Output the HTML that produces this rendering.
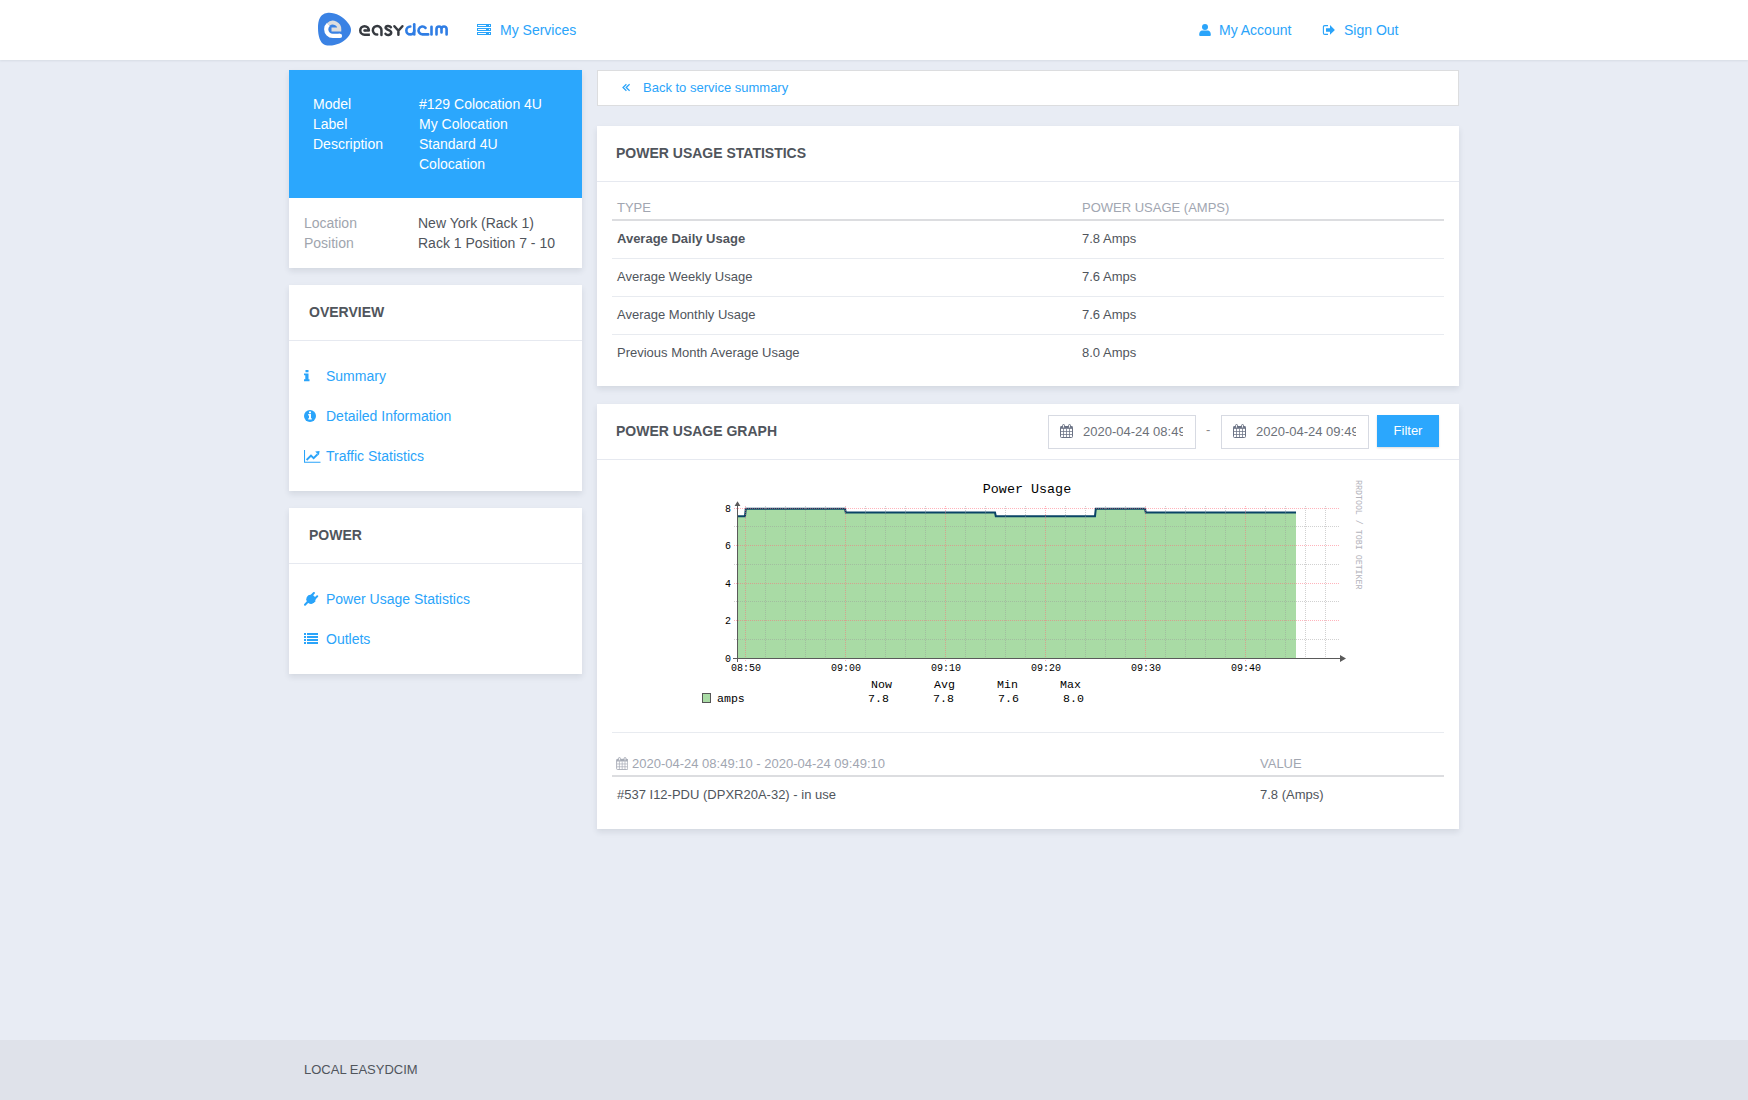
<!DOCTYPE html>
<html><head><meta charset="utf-8">
<style>
*{box-sizing:border-box;margin:0;padding:0}
html,body{width:1748px;height:1100px;overflow:hidden}
body{background:#e8ecf4;font-family:"Liberation Sans",sans-serif;color:#50555c;position:relative}
.abs{position:absolute}
#hdr{left:0;top:0;width:1748px;height:60px;background:#fff;box-shadow:0 1px 2px rgba(40,50,80,.09)}
.nav{position:absolute;top:0;height:60px;line-height:60px;font-size:14px;color:#2aa4fa;white-space:nowrap}
.nav svg{position:absolute}
.panel{position:absolute;background:#fff;box-shadow:0 3px 6px rgba(30,35,60,.1)}
.ph{height:56px;border-bottom:1px solid #e6e9f0;padding:0 0 0 20px;font-size:14px;font-weight:bold;line-height:55px;color:#50555c}
.menu{padding:15px 0}
.menu div{position:relative;height:40px;line-height:40px;font-size:14px;color:#2aa4fa;padding-left:37px}
.menu svg{position:absolute;left:15px;top:14px}
.kv{position:relative;font-size:14px;line-height:20px}
.kv .k{position:absolute;left:0}
.kv .v{position:absolute}
#foot{left:0;top:1040px;width:1748px;height:60px;background:#dfe2ea}
.tbl{border-collapse:collapse;font-size:13px;color:#50555c}
.tbl td{padding:0 0 0 5px;height:38px;line-height:18px;border-bottom:1px solid #e8ebf0;vertical-align:middle}
.tbl tr.th td{color:#a1a6b1;height:30px;border-bottom:2px solid #dcdde0;vertical-align:top;padding-top:9px}
.tbl tr.last td{border-bottom:none}
.inp{position:absolute;width:148px;height:34px;border:1px solid #d7dae2;font-size:13px;color:#6c7179}
</style></head><body>
<div id="hdr" class="abs">
  <!-- logo -->
  <svg class="abs" style="left:310px;top:8px" width="150" height="44" viewBox="310 8 150 44">
    <path d="M327 13 C334 12 343 16 348 23 C352 28 352 32 348 37 C342 44 332 47 325 45 C320 43 318 36 318 28 C318 20 320 14 327 13 Z" fill="#3a82e4"/>
    <path d="M340 35.9 H332.8 A6.6 6.6 0 0 1 326.2 29.3 A6.6 6.6 0 0 1 328.4 24.4" fill="none" stroke="#fff" stroke-width="4.2" stroke-linecap="butt"/>
    <path d="M340 35.9 H339" fill="none" stroke="#fff" stroke-width="4.2" stroke-linecap="round"/>
    <path d="M328.2 24.5 A6.6 6.6 0 0 1 339.4 29.5 L331.5 29.5" fill="none" stroke="#dedede" stroke-width="3.8" stroke-linecap="butt"/>
    <g fill="none" stroke="#363a40" stroke-width="2.5" stroke-linejoin="round">
      <path d="M369.9 34.75 H364.55 A4.3 4.3 0 1 1 368.85 30.45 H364.6" stroke-linecap="butt"/>
      <path d="M364.6 30.45 H364.5" stroke-linecap="round"/>
      <path d="M377.2 34.6 A4.3 4.3 0 1 1 381.45 30.45 L381.45 34.9" stroke-linecap="round"/>
      <path d="M390.9 27.2 C389.8 25.6 385.8 25.4 385.6 27.7 C385.4 30 391.2 29.6 391.2 32.6 C391.2 35.6 386.6 35.6 385.5 33.9" stroke-linecap="round"/>
      <path d="M394.4 26.2 L398.4 30.8 L402.4 26.2 M398.4 30.8 L398.4 34.8" stroke-linecap="round"/>
    </g>
    <g fill="none" stroke="#2f7de4" stroke-width="2.6" stroke-linejoin="round">
      <path d="M410.3 26.5 A3.95 3.95 0 1 0 414.25 30.45" stroke-linecap="round"/>
      <path d="M414.25 24.3 V34.4" stroke-linecap="round"/>
      <path d="M425.5 27.9 A3.95 3.95 0 1 0 422.45 34.4 H428.2" stroke-linecap="round"/>
      <path d="M431.5 26.7 V34.4" stroke-linecap="round"/>
      <path d="M436.5 34.4 V29 A2.5 2.5 0 0 1 441.5 29 V32.4 M441.5 29 A2.55 2.5 0 0 1 446.6 29 V34.4" stroke-linecap="round"/>
    </g>
  </svg>
  <div class="nav" style="left:477px">
    <svg style="left:0;top:24px" width="14" height="11" viewBox="0 0 14 11"><g fill="#2aa4fa"><rect x="0" y="0" width="14" height="3"/><rect x="0" y="4" width="14" height="3"/><rect x="0" y="8" width="14" height="3"/></g><g fill="#fff"><rect x="1" y="1" width="8" height="1"/><rect x="1" y="5" width="8" height="1"/><rect x="1" y="9" width="8" height="1"/><rect x="12" y="1" width="1" height="1"/><rect x="12" y="5" width="1" height="1"/><rect x="12" y="9" width="1" height="1"/></g></svg>
    <span style="position:absolute;left:23px">My Services</span>
  </div>
  <div class="nav" style="left:1199px">
    <svg style="left:0;top:24px" width="12" height="12" viewBox="0 0 12 12"><circle cx="6" cy="3" r="3" fill="#2aa4fa"/><path d="M0.2 11 C0.2 7.5 2 6.5 3.2 6.5 L8.8 6.5 C10 6.5 11.8 7.5 11.8 11 Q11.8 12 10.8 12 L1.2 12 Q0.2 12 0.2 11Z" fill="#2aa4fa"/></svg>
    <span style="position:absolute;left:20px">My Account</span>
  </div>
  <div class="nav" style="left:1322px">
    <svg style="left:0;top:24px" width="14" height="12" viewBox="0 0 14 12"><path d="M6 1.6 L2.8 1.6 Q1.4 1.6 1.4 3 L1.4 9 Q1.4 10.4 2.8 10.4 L6 10.4" fill="none" stroke="#2aa4fa" stroke-width="1.1"/><path d="M4 4.2 L8 4.2 L8 1.1 L12.9 5.9 L8 10.7 L8 7.8 L4 7.8 Z" fill="#2aa4fa"/></svg>
    <span style="position:absolute;left:22px">Sign Out</span>
  </div>
</div>

<!-- LEFT COLUMN -->
<div class="panel" style="left:289px;top:70px;width:293px;height:198px">
  <div style="background:#2ba7fd;height:128px;padding:24px 0 0 24px;color:#fff">
    <div class="kv" style="height:80px">
      <div class="k" style="top:0">Model</div><div class="k" style="top:20px">Label</div><div class="k" style="top:40px">Description</div>
      <div class="v" style="left:106px;top:0;width:150px">#129 Colocation 4U<br>My Colocation<br>Standard 4U<br>Colocation</div>
    </div>
  </div>
  <div style="padding:15px 0 0 15px">
    <div class="kv" style="height:40px">
      <div class="k" style="top:0;color:#a0a5ae">Location<br>Position</div>
      <div class="v" style="left:114px;top:0;color:#50555c">New York (Rack 1)<br>Rack 1 Position 7 - 10</div>
    </div>
  </div>
</div>

<div class="panel" style="left:289px;top:285px;width:293px;height:206px">
  <div class="ph" style="height:56px">OVERVIEW</div>
  <div class="menu">
    <div><svg width="7" height="12" viewBox="0 0 7 12" style="left:15px;top:14px"><path d="M1.2 0 H4.2 V2.3 H1.2 Z M-0.3 3.6 H4.2 V9.2 H5.2 V11.2 H-0.3 V9.2 H1 V5.2 H-0.3 Z" fill="#2aa4fa" transform="translate(0.3 0)"/></svg>Summary</div>
    <div><svg width="12" height="12" viewBox="0 0 12 12" style="left:15px;top:14px"><circle cx="6" cy="6" r="6" fill="#2aa4fa"/><path d="M5 1.4 H7 V3.2 H5 Z M4.2 4 H7 V8.2 H7.8 V9.6 H4.2 V8.2 H5 V5.4 H4.2 Z" fill="#fff"/></svg>Detailed Information</div>
    <div><svg width="17" height="13" viewBox="0 0 17 13" style="left:15px;top:14px"><path d="M0.5 0 V12.3 H16.5" fill="none" stroke="#2aa4fa" stroke-width="1.1"/><path d="M2.6 10 L7 5.6 L9.6 8.1 L13.6 4.2" fill="none" stroke="#2aa4fa" stroke-width="1.9" stroke-linejoin="miter"/><path d="M11.2 1.6 L15.6 0.9 L14.9 5.3 Z" fill="#2aa4fa"/></svg>Traffic Statistics</div>
  </div>
</div>

<div class="panel" style="left:289px;top:508px;width:293px;height:166px">
  <div class="ph" style="height:56px">POWER</div>
  <div class="menu">
    <div><svg width="15" height="14" viewBox="0 0 15 14" style="left:15px;top:13px"><g transform="translate(-304 -592)"><circle cx="310.9" cy="599.3" r="4.6" fill="#2aa4fa"/><path d="M310.9 596 L313.9 593 M314.2 599.2 L317.2 596.3 M307.6 602 L305 604.7" stroke="#2aa4fa" stroke-width="2" stroke-linecap="round"/><path d="M308.5 595 L313 595.5 L315.5 601.5 L311 603.8 Z" fill="#2aa4fa"/></g></svg>Power Usage Statistics</div>
    <div><svg width="15" height="12" viewBox="0 0 15 12" style="left:15px;top:14px"><g fill="#2aa4fa"><rect x="0" y="0" width="2" height="2"/><rect x="3" y="0" width="11" height="2"/><rect x="0" y="3" width="2" height="2"/><rect x="3" y="3" width="11" height="2"/><rect x="0" y="6" width="2" height="2"/><rect x="3" y="6" width="11" height="2"/><rect x="0" y="9" width="2" height="2"/><rect x="3" y="9" width="11" height="2"/></g></svg>Outlets</div>
  </div>
</div>

<!-- RIGHT COLUMN -->
<div class="abs" style="left:597px;top:70px;width:862px;height:36px;background:#fff;border:1px solid #dcdddf">
  <svg class="abs" style="left:24px;top:12px" width="9" height="9" viewBox="0 0 9 9"><path d="M4.4 1.2 L1 4.5 L4.4 7.8 M7.6 1.2 L4.2 4.5 L7.6 7.8" fill="none" stroke="#2aa4fa" stroke-width="1.25"/></svg>
  <div class="abs" style="left:45px;top:0;line-height:33px;font-size:13px;color:#2aa4fa">Back to service summary</div>
</div>
<div class="panel" style="left:597px;top:126px;width:862px;height:260px">
  <div class="ph" style="height:56px;padding-left:19px">POWER USAGE STATISTICS</div>
  <table class="tbl" style="position:absolute;left:15px;top:64px;width:832px">
    <tr class="th"><td style="width:465px">TYPE</td><td>POWER USAGE (AMPS)</td></tr>
    <tr><td style="font-weight:bold">Average Daily Usage</td><td>7.8 Amps</td></tr>
    <tr><td>Average Weekly Usage</td><td>7.6 Amps</td></tr>
    <tr><td>Average Monthly Usage</td><td>7.6 Amps</td></tr>
    <tr class="last"><td>Previous Month Average Usage</td><td>8.0 Amps</td></tr>
  </table>
</div>
<div class="panel" style="left:597px;top:404px;width:862px;height:425px">
  <div class="ph" style="height:56px;padding-left:19px">POWER USAGE GRAPH</div>
  <div class="inp" style="left:451px;top:11px">
    <svg class="abs" style="left:11px;top:8px" width="13" height="14" viewBox="0 0 13 14"><rect x="0.5" y="2.5" width="12" height="11" rx="1" fill="none" stroke="#6b7385" stroke-width="1"/><rect x="0.5" y="2.3" width="12" height="2.5" fill="#6b7385"/><path d="M3.5 4.8 V13 M6.5 4.8 V13 M9.5 4.8 V13 M1 7.5 H12 M1 10.5 H12" stroke="#6b7385" stroke-width="1" stroke-opacity="0.75"/><rect x="2.6" y="0.5" width="1.9" height="3.6" rx="0.9" fill="#fff" stroke="#6b7385" stroke-width="1"/><rect x="8.6" y="0.5" width="1.9" height="3.6" rx="0.9" fill="#fff" stroke="#6b7385" stroke-width="1"/></svg>
    <div class="abs" style="left:34px;top:0;width:100px;overflow:hidden;white-space:nowrap;line-height:32px">2020-04-24 08:49:10</div>
  </div>
  <div class="abs" style="left:609px;top:11px;line-height:30px;font-size:13px;color:#888">-</div>
  <div class="inp" style="left:624px;top:11px">
    <svg class="abs" style="left:11px;top:8px" width="13" height="14" viewBox="0 0 13 14"><rect x="0.5" y="2.5" width="12" height="11" rx="1" fill="none" stroke="#6b7385" stroke-width="1"/><rect x="0.5" y="2.3" width="12" height="2.5" fill="#6b7385"/><path d="M3.5 4.8 V13 M6.5 4.8 V13 M9.5 4.8 V13 M1 7.5 H12 M1 10.5 H12" stroke="#6b7385" stroke-width="1" stroke-opacity="0.75"/><rect x="2.6" y="0.5" width="1.9" height="3.6" rx="0.9" fill="#fff" stroke="#6b7385" stroke-width="1"/><rect x="8.6" y="0.5" width="1.9" height="3.6" rx="0.9" fill="#fff" stroke="#6b7385" stroke-width="1"/></svg>
    <div class="abs" style="left:34px;top:0;width:100px;overflow:hidden;white-space:nowrap;line-height:32px">2020-04-24 09:49:10</div>
  </div>
  <div class="abs" style="left:780px;top:11px;width:62px;height:32px;background:#2ba7fd;color:#fff;font-size:13px;line-height:31px;text-align:center;box-shadow:0 1px 2px rgba(0,0,0,.15)">Filter</div>
  <div class="abs" style="left:15px;top:328px;width:832px;border-top:1px solid #e8ebf0"></div>
  <table class="tbl" style="position:absolute;left:15px;top:342px;width:832px">
    <tr class="th"><td style="width:643px;padding-left:4px"><svg width="12.4" height="13" viewBox="0 0 13 14" style="vertical-align:-2px;margin-right:3.6px"><rect x="0.5" y="2.5" width="12" height="11" rx="1" fill="none" stroke="#a6abb6" stroke-width="1"/><rect x="0.5" y="2.3" width="12" height="2.5" fill="#a6abb6"/><path d="M3.5 4.8 V13 M6.5 4.8 V13 M9.5 4.8 V13 M1 7.5 H12 M1 10.5 H12" stroke="#a6abb6" stroke-width="1" stroke-opacity="0.75"/><rect x="2.6" y="0.5" width="1.9" height="3.6" rx="0.9" fill="#fff" stroke="#a6abb6" stroke-width="1"/><rect x="8.6" y="0.5" width="1.9" height="3.6" rx="0.9" fill="#fff" stroke="#a6abb6" stroke-width="1"/></svg>2020-04-24 08:49:10 - 2020-04-24 09:49:10</td><td>VALUE</td></tr>
    <tr class="last"><td style="padding-bottom:2px">#537 I12-PDU (DPXR20A-32) - in use</td><td style="padding-bottom:2px">7.8 (Amps)</td></tr>
  </table>
</div>

<!--CHART--><svg class="abs" style="left:690px;top:470px" width="690" height="242" viewBox="690 470 690 242">
<path d="M738 658 L738 516.20 L745 516.20 L745.8 508.70 L845 508.70 L845.8 512.45 L995 512.45 L995.8 516.20 L1095 516.20 L1095.8 508.70 L1145 508.70 L1145.8 512.45 L1296 512.45 L1296 658 Z" fill="#a9dba5"/>
<path d="M738 516.20 L745 516.20 L745.8 508.70 L845 508.70 L845.8 512.45 L995 512.45 L995.8 516.20 L1095 516.20 L1095.8 508.70 L1145 508.70 L1145.8 512.45 L1296 512.45 " fill="none" stroke="#0a4466" stroke-width="2" stroke-linejoin="miter"/>
<path d="M765.5 506 V658 M785.5 506 V658 M805.5 506 V658 M825.5 506 V658 M865.5 506 V658 M885.5 506 V658 M905.5 506 V658 M925.5 506 V658 M965.5 506 V658 M985.5 506 V658 M1005.5 506 V658 M1025.5 506 V658 M1065.5 506 V658 M1085.5 506 V658 M1105.5 506 V658 M1125.5 506 V658 M1165.5 506 V658 M1185.5 506 V658 M1205.5 506 V658 M1225.5 506 V658 M1265.5 506 V658 M1285.5 506 V658 M1305.5 506 V658 M1325.5 506 V658" stroke="#9a9a9a" stroke-opacity="0.45" stroke-width="1" stroke-dasharray="1 1" shape-rendering="crispEdges"/>
<path d="M734 526.5 H1340 M734 564.5 H1340 M734 601.5 H1340 M734 639.5 H1340" stroke="#9a9a9a" stroke-opacity="0.45" stroke-width="1" stroke-dasharray="1 1" shape-rendering="crispEdges"/>
<path d="M745.5 506 V661 M845.5 506 V661 M945.5 506 V661 M1045.5 506 V661 M1145.5 506 V661 M1245.5 506 V661 M734 508.5 H1340 M734 545.5 H1340 M734 583.5 H1340 M734 620.5 H1340" stroke="#ff6a7a" stroke-opacity="0.5" stroke-width="1" stroke-dasharray="1 1" shape-rendering="crispEdges"/>
<path d="M733 658.5 H1341 M737.5 662 V505" stroke="#5a5a5a" stroke-width="1" shape-rendering="crispEdges"/>
<path d="M1340 655 L1346 658.5 L1340 662 Z M734.6 506 L737.5 501.2 L740.4 506 Z" fill="#5a5a5a"/>
<g font-family="Liberation Mono" font-size="10" fill="#000"><text x="731" y="661.6" text-anchor="end">0</text><text x="731" y="623.6" text-anchor="end">2</text><text x="731" y="586.6" text-anchor="end">4</text><text x="731" y="548.6" text-anchor="end">6</text><text x="731" y="511.6" text-anchor="end">8</text><text x="745.9" y="671.3" text-anchor="middle">08:50</text><text x="845.9" y="671.3" text-anchor="middle">09:00</text><text x="945.9" y="671.3" text-anchor="middle">09:10</text><text x="1045.9" y="671.3" text-anchor="middle">09:20</text><text x="1145.9" y="671.3" text-anchor="middle">09:30</text><text x="1245.9" y="671.3" text-anchor="middle">09:40</text></g>
<text x="1027" y="493" text-anchor="middle" font-family="Liberation Mono" font-size="13.4" fill="#000">Power Usage</text>
<rect x="702.5" y="693.5" width="8" height="9" fill="#a9dba5" stroke="#555" stroke-width="1"/>
<g font-family="Liberation Mono" font-size="11.6" fill="#000"><text x="717" y="702">amps</text><text x="871" y="688">Now</text><text x="868" y="702">7.8</text><text x="934" y="688">Avg</text><text x="933" y="702">7.8</text><text x="997" y="688">Min</text><text x="998" y="702">7.6</text><text x="1060" y="688">Max</text><text x="1063" y="702">8.0</text></g>
<text transform="translate(1356 480) rotate(90)" font-family="Liberation Mono" font-size="8.3" fill="#b4b4bc">RRDTOOL / TOBI OETIKER</text>
</svg><!--/CHART-->
<div id="foot" class="abs"><div style="position:absolute;left:304px;top:0;line-height:60px;font-size:13px;color:#50555c">LOCAL EASYDCIM</div></div>
</body></html>
